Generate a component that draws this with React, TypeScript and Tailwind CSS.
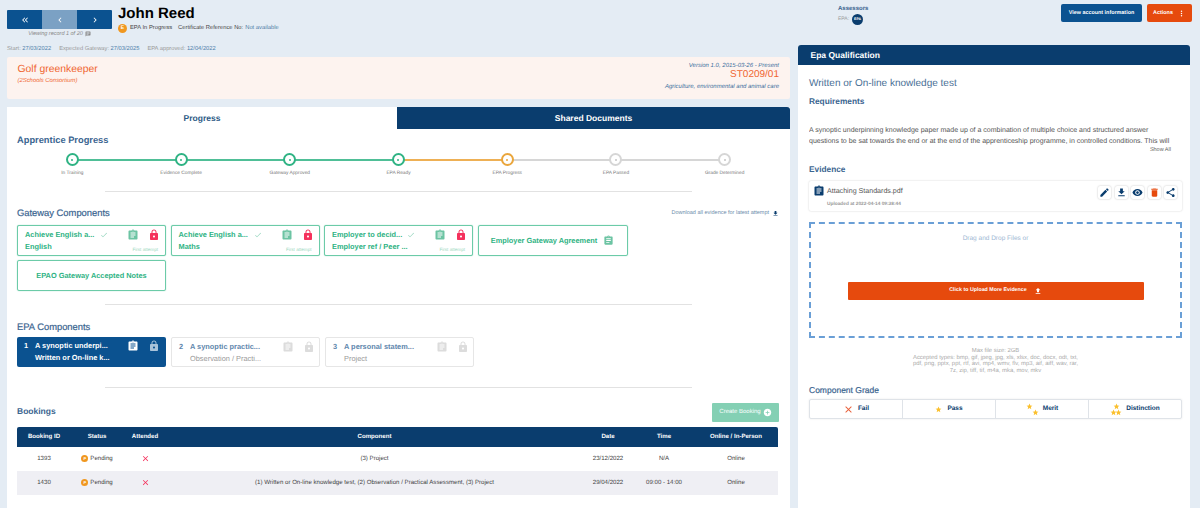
import {
  MdAddCircle,
  MdAssignment,
  MdCheck,
  MdChat,
  MdChevronLeft,
  MdChevronRight,
  MdClose,
  MdDelete,
  MdEdit,
  MdFileDownload,
  MdFileUpload,
  MdKeyboardDoubleArrowLeft,
  MdLock,
  MdMoreVert,
  MdShare,
  MdStar,
  MdVisibility,
} from "react-icons/md";

const steps = [
  { label: "In Training", ring: "border-[#2fb384]", dot: "bg-[#2fb384]", line: "bg-[#4fbf97]" },
  { label: "Evidence Complete", ring: "border-[#2fb384]", dot: "bg-[#2fb384]", line: "bg-[#4fbf97]" },
  { label: "Gateway Approved", ring: "border-[#2fb384]", dot: "bg-[#2fb384]", line: "bg-[#4fbf97]" },
  { label: "EPA Ready", ring: "border-[#2fb384]", dot: "bg-[#2fb384]", line: "bg-[#eeb055]" },
  { label: "EPA Progress", ring: "border-[#eaa63c]", dot: "bg-[#eaa63c]", line: "bg-[#d6d6d6]" },
  { label: "EPA Passed", ring: "border-[#d6d6d6]", dot: "bg-[#c4c4c4]", line: "bg-[#d6d6d6]" },
  { label: "Grade Determined", ring: "border-[#d6d6d6]", dot: "bg-[#c4c4c4]", line: "" },
];

const bookings = [
  { id: "1393", component: "(3) Project", date: "23/12/2022", time: "N/A", mode: "Online", bg: "bg-white" },
  {
    id: "1430",
    component: "(1) Written or On-line knowledge test, (2) Observation / Practical Assessment, (3) Project",
    date: "29/04/2022",
    time: "09:00 - 14:00",
    mode: "Online",
    bg: "bg-[#efeff4]",
  },
];

function GatewayCard({ title, sub }: { title: string; sub: string }) {
  return (
    <div className="relative w-[149px] h-[31px] border border-[#6ccba8] shadow-[0_0_1px_#6ccba8] rounded-[2px] bg-white pl-[7px] pt-[3px] text-[#2fb384] font-bold text-[7.4px] leading-[12px]">
      <div className="flex items-center">
        <span className="w-[72px] whitespace-nowrap">{title}</span>
        <MdCheck className="ml-[3px] text-[8px] text-[#8fd3ba]" />
        <MdAssignment className="ml-[19px] text-[12px] text-[#6cc4a3]" />
        <MdLock className="ml-[9px] text-[12px] text-[#f5315c]" />
      </div>
      <div>{sub}</div>
      <span className="absolute right-[7px] bottom-[2px] font-normal text-[4.6px] leading-[6px] text-[#9bd8c1]">First attempt</span>
    </div>
  );
}

function EpaCard({ n, title, sub, active }: { n: number; title: string; sub: string; active?: boolean }) {
  return (
    <div
      className={
        active
          ? "w-[149px] h-[30px] rounded-[2px] bg-[#0b5290] pl-[7px] pt-[3px] flex text-[7.4px] leading-[12px] font-bold text-white"
          : "w-[149px] h-[30px] rounded-[2px] bg-white border border-[#e6e6e6] pl-[7px] pt-[3px] flex text-[7.4px] leading-[12px] font-bold text-[#5f87ad]"
      }
    >
      <span className="w-[11px]">{n}</span>
      <div className="w-[90px] whitespace-nowrap">
        <div>{title}</div>
        <div className={active ? "" : "font-normal text-[#9a9a9a]"}>{sub}</div>
      </div>
      <MdAssignment className={active ? "ml-[2px] text-[12px] text-white" : "ml-[2px] text-[12px] text-[#dcdcdc]"} />
      <MdLock className={active ? "ml-[9px] text-[12px] text-[#a9c3da]" : "ml-[9px] text-[12px] text-[#dcdcdc]"} />
    </div>
  );
}

function FileAction({ children }: { children: React.ReactNode }) {
  return (
    <span className="w-[13px] h-[13px] rounded-[2px] bg-white shadow-[0_0_2px_rgba(0,0,0,0.25)] flex items-center justify-center text-[11px] text-[#0a3d6e]">
      {children}
    </span>
  );
}

function GradeCell({ icon, label, last }: { icon: React.ReactNode; label: string; last?: boolean }) {
  return (
    <div className={last ? "flex-1 flex items-center justify-center gap-[4px]" : "flex-1 flex items-center justify-center gap-[4px] border-r border-[#dfe3e8]"}>
      {icon}
      <span className="text-[6.5px] font-bold text-[#0a3d6e]">{label}</span>
    </div>
  );
}

const Star = ({ className }: { className: string }) => <MdStar className={"text-[7px] text-[#fbc02d] " + className} />;

export default function App() {
  return (
    <div className="w-[1200px] h-[508px] overflow-hidden bg-[#e4ecf4] flex font-['Liberation_Sans',Arial,sans-serif] [text-rendering:geometricPrecision] text-[#333]">
      {/* left column */}
      <div className="w-[783px] ml-[7px] flex flex-col">
        <div className="flex pt-[10px] h-[44px]">
          <div className="w-[105px]">
            <div className="flex h-[19px] rounded-[1px] overflow-hidden text-white text-[10px]">
              <span className="flex-1 bg-[#0b5290] flex items-center justify-center"><MdKeyboardDoubleArrowLeft /></span>
              <span className="flex-1 bg-[#7ba1c4] flex items-center justify-center"><MdChevronLeft /></span>
              <span className="flex-1 bg-[#0b5290] flex items-center justify-center"><MdChevronRight /></span>
            </div>
            <div className="mt-[1px] flex items-center justify-center gap-[2px] text-[5.5px] italic text-[#888] leading-[8px]">
              Viewing record 1 of 20 <MdChat className="text-[6px] text-[#888]" />
            </div>
          </div>
          <div className="ml-[6px] -mt-[5px]">
            <div className="text-[15px] leading-[18px] font-bold text-black">John Reed</div>
            <div className="flex items-center text-[5.8px] leading-[10px] text-[#444]">
              <span className="w-[9px] h-[9px] rounded-full bg-[#f0971f] text-white text-[5px] font-bold flex items-center justify-center">E</span>
              <span className="ml-[3px]">EPA In Progress</span>
              <span className="ml-[6px]">Certificate Reference No:</span>
              <span className="ml-[2px] text-[#4f7da6]">Not available</span>
            </div>
          </div>
        </div>
        <div className="h-[13px] -mt-[1px] mb-[1px] flex items-center text-[5.75px] text-[#999] gap-[8px]">
          <span>Start: <b className="font-normal text-[#4f80ab]">27/03/2022</b></span>
          <span>Expected Gateway: <b className="font-normal text-[#4f80ab]">27/03/2025</b></span>
          <span>EPA approved: <b className="font-normal text-[#4f80ab]">12/04/2022</b></span>
        </div>
        <div className="h-[42px] bg-[#fdf3ef] rounded-[2px] flex justify-between pl-[10.5px] pr-[11px] pt-[6px] text-[#f0652f]">
          <div>
            <div className="text-[10.4px] leading-[12px] mt-[1px]">Golf greenkeeper</div>
            <div className="text-[5.9px] leading-[8px] mt-[1px] italic">(2Schools Consortium)</div>
          </div>
          <div className="text-right">
            <div className="text-[6px] leading-[7px] italic text-[#3b6f9e]">Version 1.0, 2015-03-26 - Present</div>
            <div className="text-[10px] leading-[10px]">ST0209/01</div>
            <div className="text-[6px] leading-[9px] mt-[3px] italic text-[#3b6f9e]">Agriculture, environmental and animal care</div>
          </div>
        </div>

        <div className="mt-[8px] flex-1 bg-white">
          <div className="flex h-[22px] text-[8.5px] font-bold">
            <div className="w-[390px] flex items-center justify-center text-[#2c5a85]">Progress</div>
            <div className="flex-1 bg-[#0a3d6e] rounded-tr-[3px] flex items-center justify-center text-white">Shared Documents</div>
          </div>

          <div className="px-[10px]">
            <h2 className="mt-[5px] text-[9.3px] leading-[12px] font-bold text-[#3b6590]">Apprentice Progress</h2>
            <div className="grid grid-cols-7 mt-[7px] ml-[1px] mr-[1px]">
              {steps.map((s) => (
                <div key={s.label} className="relative flex flex-col items-center">
                  {s.line && <span className={"absolute left-1/2 top-[5.5px] w-full h-[2px] " + s.line} />}
                  <span className={"relative w-[13px] h-[13px] rounded-full bg-white border-2 flex items-center justify-center " + s.ring}>
                    <span className={"w-[2px] h-[2px] rounded-full " + s.dot} />
                  </span>
                  <span className="mt-[4px] text-[4.8px] leading-[7px] text-[#777]">{s.label}</span>
                </div>
              ))}
            </div>

            <div className="mt-[14px] ml-[88px] w-[587px] h-px bg-[#e2e2e2]" />

            <div className="mt-[15px] h-[12px] flex items-center justify-between">
              <h2 className="text-[9.4px] font-normal text-[#3b6590] [-webkit-text-stroke:0.2px_#3b6590]">Gateway Components</h2>
              <span className="flex items-center gap-[3px] text-[5.5px] text-[#6d8cab] mr-[1px]">
                Download all evidence for latest attempt <MdFileDownload className="text-[7px] text-[#0a3d6e]" />
              </span>
            </div>
            <div className="mt-[6px] flex flex-wrap gap-x-[4.5px] gap-y-[4px]">
              <GatewayCard title="Achieve English a..." sub="English" />
              <GatewayCard title="Achieve English a..." sub="Maths" />
              <GatewayCard title="Employer to decid..." sub="Employer ref / Peer ..." />
              <div className="w-[150px] h-[31px] border border-[#6ccba8] shadow-[0_0_1px_#6ccba8] rounded-[2px] flex items-center justify-center gap-[6px] text-[7.4px] font-bold text-[#2fb384]">
                Employer Gateway Agreement <MdAssignment className="text-[11px] text-[#6cc4a3]" />
              </div>
              <div className="w-[149px] h-[31px] border border-[#6ccba8] shadow-[0_0_1px_#6ccba8] rounded-[2px] flex items-center justify-center text-[7.4px] font-bold text-[#2fb384]">
                EPAO Gateway Accepted Notes
              </div>
            </div>

            <div className="mt-[13px] ml-[88px] w-[587px] h-px bg-[#e2e2e2]" />

            <h2 className="mt-[16px] text-[9.4px] leading-[12px] text-[#3b6590] [-webkit-text-stroke:0.2px_#3b6590]">EPA Components</h2>
            <div className="mt-[4px] flex gap-[5px]">
              <EpaCard n={1} title="A synoptic underpi..." sub="Written or On-line k..." active />
              <EpaCard n={2} title="A synoptic practic..." sub="Observation / Practi..." />
              <EpaCard n={3} title="A personal statem..." sub="Project" />
            </div>

            <div className="mt-[20px] ml-[88px] w-[587px] h-px bg-[#e2e2e2]" />

            <div className="mt-[15px] h-[19px] flex items-center justify-between">
              <h2 className="text-[8.5px] -mt-[2px] font-bold text-[#3b6590]">Bookings</h2>
              <span className="w-[67px] h-[19px] mr-[1px] rounded-[1px] bg-[#84d0b4] flex items-center justify-center gap-[2px] text-[6px] text-white">
                Create Booking <MdAddCircle className="text-[9px]" />
              </span>
            </div>

            <table className="mt-[5px] w-[761px] table-fixed text-center text-[6.1px] text-[#444]">
              <thead>
                <tr className="h-[20px] bg-[#0a3d6e] text-white font-bold">
                  <th className="w-[54px] rounded-tl-[2px]">Booking ID</th>
                  <th className="w-[52px]">Status</th>
                  <th className="w-[44px]">Attended</th>
                  <th>Component</th>
                  <th className="w-[52px]">Date</th>
                  <th className="w-[60px]">Time</th>
                  <th className="w-[84px] rounded-tr-[2px]">Online / In-Person</th>
                </tr>
              </thead>
              <tbody>
                {bookings.map((b) => (
                  <tr key={b.id} className={"h-[24px] " + b.bg}>
                    <td>{b.id}</td>
                    <td>
                      <span className="inline-flex items-center gap-[2px] align-middle">
                        <span className="w-[7px] h-[7px] rounded-full bg-[#f0971f] text-white text-[4px] font-bold flex items-center justify-center">P</span>
                        Pending
                      </span>
                    </td>
                    <td>
                      <MdClose className="inline text-[9px] text-[#f5315c]" />
                    </td>
                    <td>{b.component}</td>
                    <td>{b.date}</td>
                    <td>{b.time}</td>
                    <td>{b.mode}</td>
                  </tr>
                ))}
              </tbody>
            </table>
          </div>
        </div>
      </div>

      {/* right column */}
      <div className="w-[392px] ml-[8px] flex flex-col">
        <div className="h-[45px] flex justify-between pt-[4px]">
          <div className="ml-[40px] pt-[2px]">
            <div className="text-[6px] leading-[7px] font-bold text-[#3b6590]">Assessors</div>
            <div className="flex items-center mt-[1px] gap-[3px] text-[5px] text-[#999]">
              EPA:
              <span className="w-[11px] h-[11px] rounded-full bg-[#0a3d6e] text-white text-[3.5px] font-bold flex items-center justify-center">EPA</span>
            </div>
          </div>
          <div className="flex gap-[5px] mr-[-2px]">
            <span className="w-[81px] h-[18px] rounded-[2px] bg-[#0b5290] text-white text-[5.4px] font-bold flex items-center justify-center">View account information</span>
            <span className="w-[45px] h-[18px] rounded-[2px] bg-[#e64a0d] text-white text-[5.4px] font-bold flex items-center justify-center gap-[4px]">
              Actions <MdMoreVert className="text-[9px]" />
            </span>
          </div>
        </div>

        <div className="flex-1 bg-white rounded-t-[3px]">
          <div className="h-[20px] bg-[#0a3d6e] rounded-t-[3px] flex items-center pl-[12.5px] text-[8.5px] font-bold text-white">Epa Qualification</div>
          <div className="pl-[11px] pr-[8px]">
            <div className="mt-[12px] pt-[1px] text-[10px] leading-[12px] text-[#4a7096]">Written or On-line knowledge test</div>
            <div className="mt-[6px] text-[8.3px] leading-[11px] font-bold text-[#3b6590]">Requirements</div>
            <p className="mt-[18px] w-[362px] text-[7px] leading-[11px] text-[#555] h-[22px] overflow-hidden">
              A synoptic underpinning knowledge paper made up of a combination of multiple choice and structured answer questions to be sat towards the end or at the end of the apprenticeship programme, in controlled conditions. This will
            </p>
            <div className="text-right pr-[11px] text-[5.5px] leading-[7px] text-[#666]">Show All</div>

            <div className="mt-[10px] text-[8.3px] leading-[11px] font-bold text-[#3b6590]">Evidence</div>
            <div className="mt-[6px] h-[30px] rounded-[2px] bg-white shadow-[0_0_2px_rgba(0,0,0,0.2)] flex pl-[4px] pr-[5px] pt-[4px]">
              <MdAssignment className="text-[12px] text-[#0a3d6e]" />
              <div className="ml-[2px] flex-1">
                <div className="mt-[1px] text-[7.1px] leading-[10px] text-[#555]">Attaching Standards.pdf</div>
                <div className="mt-[6px] text-[4.8px] leading-[6px] font-bold text-[#999]">Uploaded at 2022-04-14 09:38:44</div>
              </div>
              <div className="flex gap-[3.5px] mt-[1px]">
                <FileAction><MdEdit /></FileAction>
                <FileAction><MdFileDownload /></FileAction>
                <FileAction><MdVisibility /></FileAction>
                <FileAction><MdDelete className="text-[#e64a0d]" /></FileAction>
                <FileAction><MdShare /></FileAction>
              </div>
            </div>

            <div className="mt-[11px] h-[116px] border-2 border-dashed border-[#6a9fd6] flex flex-col items-center">
              <div className="mt-[10px] text-[6.5px] text-[#9db7d3]">Drag and Drop Files or</div>
              <div className="mt-[38px] w-[296px] h-[18px] bg-[#e64a0d] rounded-[1px] flex items-center justify-center gap-[7px] text-[5.3px] font-bold text-white">
                Click to Upload More Evidence <MdFileUpload className="text-[8px]" />
              </div>
            </div>

            <div className="mt-[10px] text-center text-[5.9px] leading-[6.5px] text-[#aaa]">
              Max file size: 2GB
              <br />
              Accepted types: bmp, gif, jpeg, jpg, xls, xlsx, doc, docx, odt, txt,
              <br />
              pdf, png, pptx, ppt, rtf, avi, mp4, wmv, flv, mp3, aif, aiff, wav, rar,
              <br />
              7z, zip, tiff, tif, m4a, mka, mov, mkv
            </div>

            <div className="mt-[11px] text-[8.5px] leading-[11px] text-[#3b6590] [-webkit-text-stroke:0.2px_#3b6590]">Component Grade</div>
            <div className="mt-[3px] h-[20px] flex rounded-[2px] border border-[#dfe3e8] shadow-[0_0_2px_rgba(0,0,0,0.1)]">
              <GradeCell icon={<MdClose className="text-[11px] text-[#e8603a]" />} label="Fail" />
              <GradeCell icon={<Star className="mr-[1px]" />} label="Pass" />
              <GradeCell
                label="Merit"
                icon={
                  <span className="relative w-[13px] h-[13px]">
                    <Star className="absolute left-0 top-0" />
                    <Star className="absolute right-0 bottom-0" />
                  </span>
                }
              />
              <GradeCell
                label="Distinction"
                last
                icon={
                  <span className="relative w-[12px] h-[13px]">
                    <Star className="absolute left-[2.5px] top-0" />
                    <Star className="absolute left-0 bottom-0" />
                    <Star className="absolute right-0 bottom-0" />
                  </span>
                }
              />
            </div>
          </div>
        </div>
      </div>
    </div>
  );
}
